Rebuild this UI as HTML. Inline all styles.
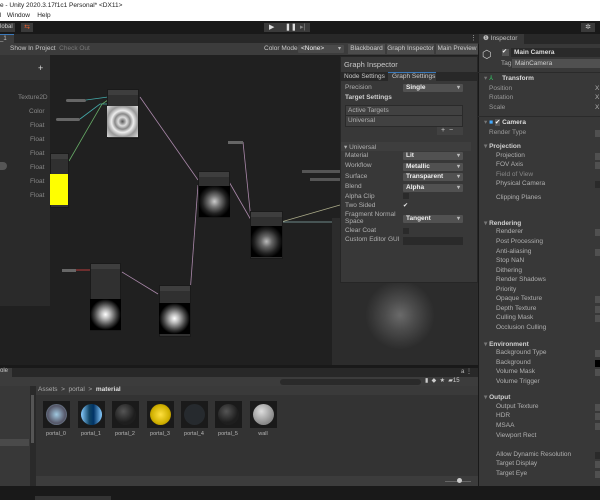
<!DOCTYPE html>
<html><head><style>
*{margin:0;padding:0;box-sizing:border-box}
body{width:600px;height:500px;overflow:hidden;background:#202020;font-family:"Liberation Sans",sans-serif;font-size:7px;color:#c4c4c4;position:relative}
.a{position:absolute;white-space:nowrap}
.dd{position:absolute;background:#515151;color:#eee;height:8px;font-size:6.5px;font-weight:bold;padding-left:3px;line-height:8px;border-radius:1px}
.dd:after{content:"▾";position:absolute;right:3px;font-size:6px;color:#bbb}
.lbl{position:absolute;color:#b0b0b0;font-size:6.5px}
.hd{position:absolute;color:#d0d0d0;font-size:6.5px;font-weight:bold}
.node{position:absolute;background:#303030;border:1px solid #1a1a1a}
.node .t{height:5px;background:#3e3e3e}
.th{position:absolute;width:27px;height:27px;background:#1a1a1a}
.th i{position:absolute;left:3px;top:3px;width:21px;height:21px;border-radius:50%}
.tl{position:absolute;font-size:5.5px;color:#b5b5b5;width:40px;text-align:center}
.v{position:absolute;left:595px;width:5px;height:7px;background:#505050}
</style></head><body>
<div class="a" style="left:0;top:0;width:600px;height:21px;background:#fff"></div>
<div class="a" style="left:0;top:2px;color:#222;font-size:6.5px">e - Unity 2020.3.17f1c1 Personal* &lt;DX11&gt;</div>
<div class="a" style="left:0;top:12px;color:#222;font-size:6.5px">l &nbsp; Window &nbsp;&nbsp; Help</div>
<div class="a" style="left:0;top:21px;width:600px;height:13px;background:#191919"></div>
<div class="a" style="left:0;top:23px;width:15px;height:9px;background:#3a3a3a;color:#ccc;font-size:6px;line-height:9px">lobal</div>
<div class="a" style="left:21px;top:23px;width:12px;height:9px;background:#3a3a3a;color:#e06030;font-size:7px;line-height:9px;text-align:center">⇆</div>
<div class="a" style="left:264px;top:23px;width:46px;height:9px;background:#3a3a3a"></div>
<div class="a" style="left:269px;top:23px;color:#ddd;font-size:7px">▶</div>
<div class="a" style="left:285px;top:23px;color:#ddd;font-size:7px">❚❚</div>
<div class="a" style="left:300px;top:23px;color:#888;font-size:7px">▸|</div>
<div class="a" style="left:581px;top:23px;width:14px;height:9px;background:#3a3a3a;color:#ccc;font-size:7px;text-align:center;line-height:9px">✲</div>
<div class="a" style="left:0;top:34px;width:478px;height:9px;background:#282828"></div>
<div class="a" style="left:0;top:34px;width:14px;height:9px;background:#3c3c3c;border-top:1px solid #3a79bb;font-size:6px;line-height:8px">_1</div>
<div class="a" style="left:470px;top:34px;color:#aaa">⋮</div>
<div class="a" style="left:0;top:43px;width:478px;height:12px;background:#3c3c3c"></div>
<div class="a" style="left:10px;top:45px;color:#c8c8c8;font-size:6.5px">Show In Project &nbsp;<span style="color:#777">Check Out</span></div>
<div class="a" style="left:264px;top:45px;color:#c8c8c8;font-size:6.5px">Color Mode</div>
<div class="dd" style="left:298px;top:45px;width:46px;font-weight:normal;background:#4a4a4a">&lt;None&gt;</div>
<div class="a" style="left:348px;top:44px;width:37px;height:10px;background:#4c4c4c;color:#ccc;font-size:6.5px;line-height:10px;text-align:center">Blackboard</div>
<div class="a" style="left:387px;top:44px;width:47px;height:10px;background:#4c4c4c;color:#ccc;font-size:6.5px;line-height:10px;text-align:center">Graph Inspector</div>
<div class="a" style="left:436px;top:44px;width:42px;height:10px;background:#4c4c4c;color:#ccc;font-size:6.5px;line-height:10px;text-align:center">Main Preview</div>
<div class="a" style="left:0;top:55px;width:50px;height:251px;background:#2a2a2a"></div>
<div class="a" style="left:0;top:55px;width:50px;height:25px;background:#333"></div>
<div class="a" style="left:38px;top:63px;color:#ddd;font-size:9px">+</div>
<div class="a" style="left:18px;top:94px;color:#888;font-size:6.5px">Texture2D</div>
<div class="a" style="left:29px;top:108px;color:#888;font-size:6.5px">Color</div>
<div class="a" style="left:30px;top:122px;color:#888;font-size:6.5px">Float</div>
<div class="a" style="left:30px;top:136px;color:#888;font-size:6.5px">Float</div>
<div class="a" style="left:30px;top:150px;color:#888;font-size:6.5px">Float</div>
<div class="a" style="left:30px;top:164px;color:#888;font-size:6.5px">Float</div>
<div class="a" style="left:30px;top:178px;color:#888;font-size:6.5px">Float</div>
<div class="a" style="left:30px;top:192px;color:#888;font-size:6.5px">Float</div>
<div class="a" style="left:0;top:162px;width:7px;height:8px;background:#555;border-radius:0 4px 4px 0"></div>
<svg class="a" style="left:0;top:0" width="600" height="500">
<g fill="none" stroke-width="0.8">
<path d="M86 100 L108 97" stroke="#4aa"/>
<path d="M80 119 L100 104 L108 104" stroke="#4aa"/>
<path d="M69 161 L102 104 L108 100" stroke="#6a6"/>
<path d="M140 97 L198 180" stroke="#a8a"/>
<path d="M243 142 L251 220" stroke="#a8a"/>
<path d="M228 180 L251 220" stroke="#a8a"/>
<path d="M122 272 L158 294" stroke="#a8a"/>
<path d="M190 294 L198 185" stroke="#a8a"/>
<path d="M281 222 L340 205" stroke="#aa8"/>
<path d="M281 222 L340 222" stroke="#8aa"/>
<path d="M74 270 L92 270" stroke="#e44"/>
</g></svg>
<div class="a" style="left:66px;top:99px;width:20px;height:3px;background:#666;border-radius:2px"></div>
<div class="a" style="left:56px;top:118px;width:24px;height:3px;background:#666;border-radius:2px"></div>
<div class="node" style="left:107px;top:89px;width:32px;height:50px"><div class="t"></div></div>
<div class="a" style="left:107px;top:106px;width:31px;height:31px;background:radial-gradient(circle,#555 0,#ddd 20%,#888 35%,#eee 50%,#999 70%,#ddd 100%)"></div>
<div class="node" style="left:50px;top:153px;width:19px;height:55px"><div class="t"></div></div>
<div class="a" style="left:50px;top:174px;width:18px;height:31px;background:#ff0"></div>
<div class="node" style="left:198px;top:171px;width:32px;height:47px"><div class="t"></div></div>
<div class="a" style="left:199px;top:186px;width:31px;height:31px;background:radial-gradient(circle,#ccc 0,#777 25%,#222 55%,#000 75%)"></div>
<div class="a" style="left:228px;top:141px;width:15px;height:3px;background:#666"></div>
<div class="node" style="left:250px;top:211px;width:33px;height:48px"><div class="t"></div></div>
<div class="a" style="left:251px;top:226px;width:31px;height:31px;background:radial-gradient(circle,#bbb 0,#666 25%,#222 55%,#000 75%)"></div>
<div class="node" style="left:90px;top:263px;width:31px;height:68px"><div class="t"></div></div>
<div class="a" style="left:90px;top:299px;width:31px;height:31px;background:radial-gradient(circle,#fff 0,#bbb 20%,#444 50%,#000 70%)"></div>
<div class="a" style="left:62px;top:269px;width:14px;height:3px;background:#666"></div>
<div class="node" style="left:159px;top:285px;width:32px;height:52px"><div class="t"></div></div>
<div class="a" style="left:159px;top:303px;width:31px;height:31px;background:radial-gradient(circle,#fff 0,#bbb 20%,#444 50%,#000 70%)"></div>
<div class="a" style="left:302px;top:170px;width:40px;height:3px;background:#555"></div>
<div class="a" style="left:310px;top:178px;width:30px;height:3px;background:#555"></div>
<div class="a" style="left:332px;top:218px;width:146px;height:148px;background:#2c2c2c"></div>
<div class="a" style="left:365px;top:280px;width:70px;height:70px;border-radius:50%;background:radial-gradient(circle,#6a6a6a 0,#4c4c4c 30%,#373737 55%,#2c2c2c 70%)"></div>
<div class="a" style="left:340px;top:56px;width:138px;height:227px;background:#383838;border:1px solid #262626"></div>
<div class="a" style="left:344px;top:60px;color:#c8c8c8;font-size:7.5px">Graph Inspector</div>
<div class="a" style="left:341px;top:72px;width:136px;height:9px;background:#282828"></div>
<div class="a" style="left:388px;top:72px;width:48px;height:9px;background:#383838;border-top:1px solid #3a79bb"></div>
<div class="a" style="left:344px;top:73px;color:#c8c8c8;font-size:6.5px">Node Settings &nbsp;&nbsp;&nbsp;Graph Settings</div>
<div class="lbl" style="left:345px;top:84px">Precision</div><div class="dd" style="left:403px;top:84px;width:60px">Single</div>
<div class="hd" style="left:345px;top:94px">Target Settings</div>
<div class="a" style="left:345px;top:105px;width:118px;height:22px;background:#414141;border:1px solid #2a2a2a"></div>
<div class="a" style="left:345px;top:115px;width:118px;height:1px;background:#2a2a2a"></div>
<div class="lbl" style="left:348px;top:107px">Active Targets</div>
<div class="lbl" style="left:348px;top:117px">Universal</div>
<div class="a" style="left:437px;top:127px;width:26px;height:8px;background:#414141;color:#ccc;font-size:7px;line-height:8px;padding-left:4px">+ &nbsp;−</div>
<div class="a" style="left:341px;top:142px;width:130px;height:9px;background:#3e3e3e"></div>
<div class="lbl" style="left:344px;top:143px">▾ Universal</div>
<div class="lbl" style="left:345px;top:152px">Material</div><div class="dd" style="left:403px;top:152px;width:60px">Lit</div>
<div class="lbl" style="left:345px;top:162px">Workflow</div><div class="dd" style="left:403px;top:163px;width:60px">Metallic</div>
<div class="lbl" style="left:345px;top:173px">Surface</div><div class="dd" style="left:403px;top:173px;width:60px">Transparent</div>
<div class="lbl" style="left:345px;top:183px">Blend</div><div class="dd" style="left:403px;top:184px;width:60px">Alpha</div>
<div class="lbl" style="left:345px;top:193px">Alpha Clip</div><div class="a" style="left:403px;top:193px;width:6px;height:6px;background:#2a2a2a"></div>
<div class="lbl" style="left:345px;top:202px">Two Sided</div><div class="a" style="left:403px;top:202px;color:#eee;font-size:6px">✔</div>
<div class="lbl" style="left:345px;top:211px;line-height:7px">Fragment Normal<br>Space</div><div class="dd" style="left:403px;top:215px;width:60px">Tangent</div>
<div class="lbl" style="left:345px;top:227px">Clear Coat</div><div class="a" style="left:403px;top:228px;width:6px;height:6px;background:#2a2a2a"></div>
<div class="lbl" style="left:345px;top:236px">Custom Editor GUI</div><div class="a" style="left:403px;top:237px;width:60px;height:8px;background:#2a2a2a"></div>
<div class="a" style="left:0;top:365px;width:478px;height:3px;background:#191919"></div>
<div class="a" style="left:0;top:368px;width:478px;height:9px;background:#282828"></div>
<div class="a" style="left:0;top:368px;width:12px;height:9px;background:#3c3c3c;font-size:6px">ole</div>
<div class="a" style="left:461px;top:368px;color:#bbb;font-size:6px">a ⋮</div>
<div class="a" style="left:0;top:377px;width:478px;height:9px;background:#3c3c3c"></div>
<div class="a" style="left:280px;top:379px;width:141px;height:6px;background:#2a2a2a;border-radius:3px"></div>
<div class="a" style="left:425px;top:377px;color:#ccc;font-size:6px">▮ &nbsp;◆ &nbsp;★ &nbsp;▰15</div>
<div class="a" style="left:0;top:386px;width:30px;height:100px;background:#383838"></div>
<div class="a" style="left:0;top:439px;width:29px;height:7px;background:#4a4a4a"></div>
<div class="a" style="left:30px;top:386px;width:6px;height:100px;background:#2a2a2a"></div>
<div class="a" style="left:31px;top:395px;width:3px;height:48px;background:#555"></div>
<div class="a" style="left:36px;top:386px;width:442px;height:100px;background:#333"></div>
<div class="a" style="left:36px;top:386px;width:442px;height:9px;background:#3a3a3a"></div>
<div class="a" style="left:38px;top:386px;color:#aaa;font-size:6.5px">Assets &nbsp;&gt;&nbsp; portal &nbsp;&gt;&nbsp; <b style="color:#ddd">material</b></div>
<div class="th" style="left:43px;top:401px"><i style="background:radial-gradient(circle,#a0c8e0,#556 60%,#9cd 100%)"></i></div>
<div class="th" style="left:78px;top:401px"><i style="background:linear-gradient(90deg,#8cf,#146 40%,#036 60%,#8cf)"></i></div>
<div class="th" style="left:112px;top:401px"><i style="background:radial-gradient(circle at 40% 35%,#555,#1e1e1e 60%)"></i></div>
<div class="th" style="left:147px;top:401px"><i style="background:radial-gradient(circle,#ffe040,#d0b000 60%,#806000)"></i></div>
<div class="th" style="left:181px;top:401px"><i style="background:#262a2e"></i></div>
<div class="th" style="left:215px;top:401px"><i style="background:radial-gradient(circle at 40% 35%,#555,#1e1e1e 60%)"></i></div>
<div class="th" style="left:250px;top:401px"><i style="background:radial-gradient(circle at 40% 35%,#ddd,#888 70%)"></i></div>
<div class="tl" style="left:36px;top:431px">portal_0</div>
<div class="tl" style="left:71px;top:431px">portal_1</div>
<div class="tl" style="left:105px;top:431px">portal_2</div>
<div class="tl" style="left:140px;top:431px">portal_3</div>
<div class="tl" style="left:174px;top:431px">portal_4</div>
<div class="tl" style="left:208px;top:431px">portal_5</div>
<div class="tl" style="left:243px;top:431px">wall</div>
<div class="a" style="left:36px;top:476px;width:442px;height:10px;background:#3c3c3c"></div>
<div class="a" style="left:445px;top:481px;width:26px;height:1px;background:#666"></div>
<div class="a" style="left:457px;top:478px;width:5px;height:5px;border-radius:50%;background:#ccc"></div>
<div class="a" style="left:0;top:486px;width:600px;height:14px;background:#191919"></div>
<div class="a" style="left:35px;top:496px;width:76px;height:4px;background:#333"></div>
<div class="a" style="left:478px;top:34px;width:122px;height:452px;background:#383838;border-left:1px solid #191919"></div>
<div class="a" style="left:478px;top:34px;width:122px;height:10px;background:#282828"></div>
<div class="a" style="left:479px;top:34px;width:45px;height:10px;background:#383838;color:#c0c0c0;font-size:6.5px;line-height:10px;padding-left:4px">❶ Inspector</div>
<div class="a" style="left:482px;top:48px;color:#ccc;font-size:11px">⬡</div>
<div class="a" style="left:502px;top:49px;width:7px;height:7px;background:#555;color:#fff;font-size:6px;line-height:7px">✔</div>
<div class="a" style="left:511px;top:48px;width:89px;height:9px;background:#2a2a2a;color:#ddd;font-size:6.5px;font-weight:bold;padding-left:3px;line-height:9px">Main Camera</div>
<div class="lbl" style="left:501px;top:60px">Tag</div>
<div class="a" style="left:512px;top:59px;width:88px;height:9px;background:#505050;color:#ccc;font-size:6.5px;padding-left:3px;line-height:9px">MainCamera</div>
<div class="a" style="left:478px;top:72px;width:122px;height:1px;background:#2a2a2a"></div>
<div class="lbl" style="left:484px;top:74px"><span style="color:#777">▾</span> <span style="color:#3c6">⅄</span> &nbsp;&nbsp;&nbsp;&nbsp;<b style="color:#ddd">Transform</b></div>
<div class="lbl" style="left:489px;top:85px;color:#999">Position</div>
<div class="lbl" style="left:489px;top:94px;color:#999">Rotation</div>
<div class="lbl" style="left:489px;top:104px;color:#999">Scale</div>
<div class="lbl" style="left:595px;top:85px">X</div><div class="lbl" style="left:595px;top:94px">X</div><div class="lbl" style="left:595px;top:104px">X</div>
<div class="a" style="left:478px;top:116px;width:122px;height:1px;background:#2a2a2a"></div>
<div class="lbl" style="left:484px;top:118px"><span style="color:#777">▾</span> <span style="color:#4af">■</span> <span style="background:#555;color:#fff">✔</span> <b style="color:#ddd">Camera</b></div>
<div class="lbl" style="left:489px;top:129px;color:#999">Render Type</div>
<div class="hd" style="left:484px;top:142px"><span style="color:#777">▾</span> Projection</div>
<div class="lbl" style="left:496px;top:152px">Projection</div>
<div class="lbl" style="left:496px;top:161px">FOV Axis</div>
<div class="lbl" style="left:496px;top:171px;color:#888">Field of View</div>
<div class="lbl" style="left:496px;top:180px">Physical Camera</div>
<div class="lbl" style="left:496px;top:194px">Clipping Planes</div>
<div class="hd" style="left:484px;top:219px"><span style="color:#777">▾</span> Rendering</div>
<div class="lbl" style="left:496px;top:228px">Renderer</div>
<div class="lbl" style="left:496px;top:238px">Post Processing</div>
<div class="lbl" style="left:496px;top:248px">Anti-aliasing</div>
<div class="lbl" style="left:496px;top:257px">Stop NaN</div>
<div class="lbl" style="left:496px;top:267px">Dithering</div>
<div class="lbl" style="left:496px;top:276px">Render Shadows</div>
<div class="lbl" style="left:496px;top:286px">Priority</div>
<div class="lbl" style="left:496px;top:295px">Opaque Texture</div>
<div class="lbl" style="left:496px;top:305px">Depth Texture</div>
<div class="lbl" style="left:496px;top:314px">Culling Mask</div>
<div class="lbl" style="left:496px;top:324px">Occlusion Culling</div>
<div class="hd" style="left:484px;top:340px"><span style="color:#777">▾</span> Environment</div>
<div class="lbl" style="left:496px;top:349px">Background Type</div>
<div class="lbl" style="left:496px;top:359px">Background</div>
<div class="lbl" style="left:496px;top:368px">Volume Mask</div>
<div class="lbl" style="left:496px;top:378px">Volume Trigger</div>
<div class="hd" style="left:484px;top:393px"><span style="color:#777">▾</span> Output</div>
<div class="lbl" style="left:496px;top:403px">Output Texture</div>
<div class="lbl" style="left:496px;top:412px">HDR</div>
<div class="lbl" style="left:496px;top:422px">MSAA</div>
<div class="lbl" style="left:496px;top:432px">Viewport Rect</div>
<div class="lbl" style="left:496px;top:451px">Allow Dynamic Resolution</div>
<div class="lbl" style="left:496px;top:460px">Target Display</div>
<div class="lbl" style="left:496px;top:470px">Target Eye</div>
<div class="v" style="top:130px"></div><div class="v" style="top:153px"></div><div class="v" style="top:162px"></div>
<div class="v" style="top:181px;background:#2a2a2a"></div>
<div class="v" style="top:229px"></div><div class="v" style="top:249px"></div><div class="v" style="top:296px"></div>
<div class="v" style="top:306px"></div><div class="v" style="top:315px"></div><div class="v" style="top:350px"></div>
<div class="v" style="top:360px;background:#000"></div><div class="v" style="top:369px"></div>
<div class="v" style="top:404px"></div><div class="v" style="top:413px"></div><div class="v" style="top:423px"></div>
<div class="v" style="top:452px;background:#2a2a2a"></div><div class="v" style="top:461px"></div><div class="v" style="top:471px"></div>
</body></html>
